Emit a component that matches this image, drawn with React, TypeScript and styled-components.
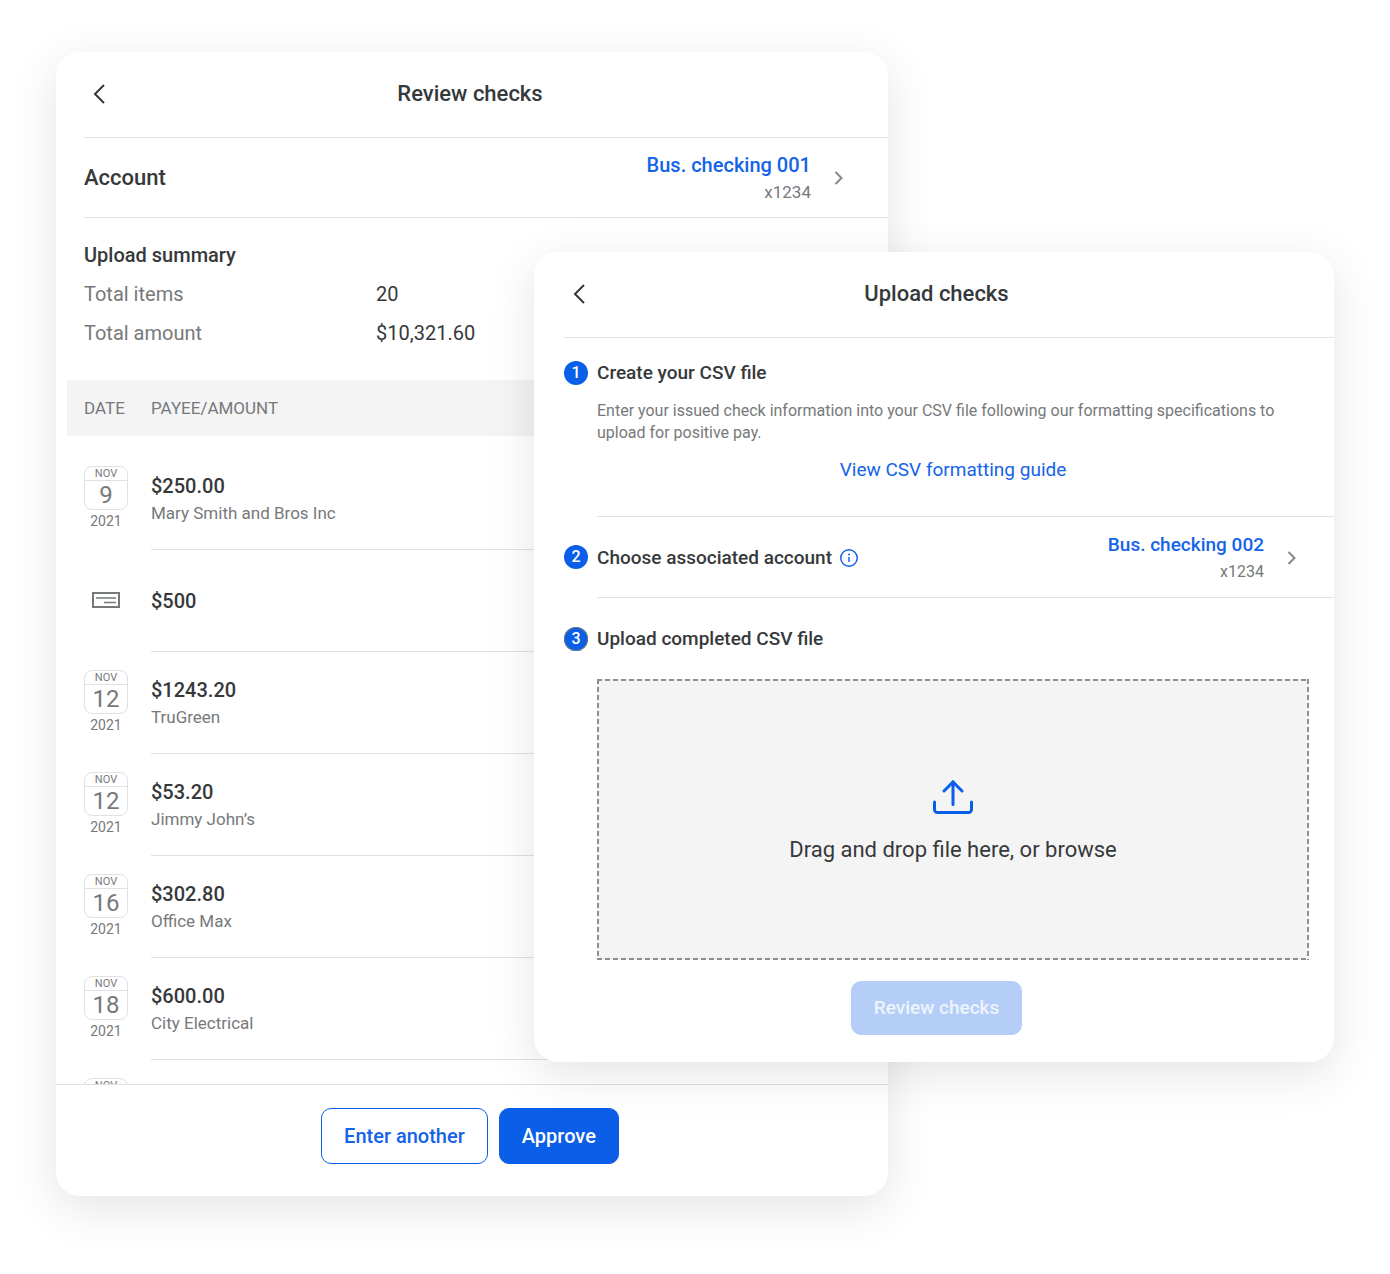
import React from 'react';
import styled, { createGlobalStyle, css } from 'styled-components';

const color = {
  ink: '#36393b',
  muted: '#76797b',
  line: '#e0e1e3',
  fill: '#f4f4f4',
  blue: '#0a5ee8',
  blueText: '#1463e8',
};

const GlobalStyle = createGlobalStyle`
  *, *::before, *::after { box-sizing: border-box; }
  body {
    margin: 0;
    background: #fff;
    color: ${color.ink};
    font-family: Roboto, 'Liberation Sans', sans-serif;
    font-size: 20px;
    line-height: 24px;
  }
  button { font: inherit; cursor: pointer; }
  h1, h2, h3, p, dl, dd, ol { margin: 0; padding: 0; }
`;

/* ---------- shared parts ---------- */

const Stage = styled.main`
  display: grid;
  padding: 52px 56px 78px;
`;

const Card = styled.section<{ $front?: boolean }>`
  grid-area: 1 / 1;
  align-self: start;
  display: flex;
  flex-direction: column;
  background: #fff;
  border-radius: 24px;
  box-shadow: 0 12px 48px rgba(0, 0, 0, 0.11);
  ${({ $front }) =>
    $front
      ? css`
          justify-self: end;
          width: 62.6%;
          margin-top: 200px;
          font-size: 19px;
          z-index: 1;
        `
      : css`
          justify-self: start;
          width: 65.1%;
        `}
`;

const Header = styled.header<{ $left: number; $right: number }>`
  display: grid;
  grid-template-columns: 30px 1fr 30px;
  align-items: center;
  margin-left: ${({ $left }) => $left}px;
  padding: 22px ${({ $right }) => $right}px 23px 0;
  border-bottom: 1px solid ${color.line};
`;

const BackButton = styled.button`
  display: grid;
  place-items: center;
  height: 40px;
  padding: 0;
  border: 0;
  background: none;
  color: ${color.ink};
`;

const Title = styled.h1`
  font-size: 22px;
  font-weight: 500;
  line-height: 28px;
  text-align: center;
`;

const AccountButton = styled.button<{ $right: number }>`
  display: flex;
  align-items: center;
  gap: 23px;
  padding: 0 ${({ $right }) => $right}px 0 0;
  border: 0;
  background: none;
  color: #85888a;
  text-align: right;
`;

const AccountName = styled.span`
  display: block;
  color: ${color.blueText};
  font-weight: 500;
  line-height: 28px;
`;

const AccountNumber = styled.span`
  display: block;
  color: ${color.muted};
  font-size: 17px;
  line-height: 26px;
`;

const Button = styled.button<{ $kind: 'outline' | 'solid' }>`
  height: 56px;
  padding: 0 22px;
  border: 1px solid ${color.blue};
  border-radius: 10px;
  font-weight: 500;
  background: ${({ $kind }) => ($kind === 'solid' ? color.blue : '#fff')};
  color: ${({ $kind }) => ($kind === 'solid' ? '#fff' : color.blueText)};

  &:disabled {
    height: 54px;
    border-color: #b5cef8;
    background: #b5cef8;
    color: #edf4fe;
    cursor: default;
  }
`;

const BackIcon = () => (
  <svg width="14" height="20" viewBox="0 0 14 20" fill="none" stroke="currentColor" strokeWidth="2" aria-hidden="true">
    <path d="M12 1 3 10l9 9" />
  </svg>
);

const ForwardIcon = () => (
  <svg width="10" height="16" viewBox="0 0 10 16" fill="none" stroke="currentColor" strokeWidth="2" aria-hidden="true">
    <path d="m1.5 2 6 6-6 6" />
  </svg>
);

interface AccountPickerProps {
  name: string;
  number: string;
  right: number;
}

const AccountPicker = ({ name, number, right }: AccountPickerProps) => (
  <AccountButton type="button" $right={right}>
    <span>
      <AccountName>{name}</AccountName>
      <AccountNumber>{number}</AccountNumber>
    </span>
    <ForwardIcon />
  </AccountButton>
);

/* ---------- review card ---------- */

const AccountRow = styled.div`
  display: flex;
  align-items: center;
  justify-content: space-between;
  margin-left: 28px;
  padding: 13px 0 12px;
  border-bottom: 1px solid ${color.line};
`;

const AccountLabel = styled.h2`
  font-size: 22px;
  font-weight: 500;
`;

const Summary = styled.section`
  padding: 25px 28px 27px;
`;

const SectionHeading = styled.h2`
  font-size: inherit;
  font-weight: 500;
`;

const Totals = styled.dl`
  display: grid;
  grid-template-columns: 292px 1fr;
  margin-top: 8px;
  line-height: 39px;
`;

const TotalName = styled.dt`
  color: ${color.muted};
`;

const CheckScroller = styled.div`
  max-height: 704px;
  margin-left: 11px;
  overflow-y: auto;
  scrollbar-width: none;
`;

const CheckTable = styled.table`
  width: 100%;
  border-spacing: 0;
  text-align: left;
`;

const HeadCell = styled.th`
  height: 56px;
  padding: 0;
  background: ${color.fill};
  color: ${color.muted};
  font-size: 17px;
  font-weight: 400;

  &:first-child {
    width: 84px;
    padding-left: 17px;
  }
`;

const DateCell = styled.td`
  height: 102px;
  padding: 0 0 2px 17px;
`;

const PayeeCell = styled.td`
  padding: 0;
  border-bottom: 1px solid ${color.line};
`;

const CheckRow = styled.tr`
  &:first-child td {
    height: 114px;
    padding-top: 12px;
  }
`;

const Amount = styled.div`
  font-weight: 500;
  line-height: 28px;
`;

const Payee = styled.div`
  color: ${color.muted};
  font-size: 17px;
  line-height: 26px;
`;

const DateStamp = styled.time`
  display: block;
  width: 44px;
  color: ${color.muted};
  text-align: center;
`;

const CalendarTile = styled.span`
  display: block;
  border: 1px solid ${color.line};
  border-radius: 8px;
`;

const Month = styled.span`
  display: block;
  border-bottom: 1px solid ${color.line};
  font-size: 11px;
  line-height: 13px;
`;

const Day = styled.span`
  display: block;
  font-size: 24px;
  line-height: 28px;
`;

const Year = styled.span`
  display: block;
  margin-top: 2px;
  font-size: 14px;
  line-height: 18px;
`;

const CheckMark = styled.span`
  display: grid;
  place-items: center;
  width: 44px;
  color: ${color.muted};
`;

const Footer = styled.footer`
  display: flex;
  justify-content: center;
  gap: 11px;
  padding: 23px 32px 32px 28px;
  border-top: 1px solid ${color.line};
`;

const CheckIcon = () => (
  <svg width="28" height="16" viewBox="0 0 28 16" fill="none" stroke="currentColor" role="img" aria-label="Undated check">
    <rect x="1" y="1" width="26" height="14" strokeWidth="2" />
    <path d="M4 6h20M12 10.500h12" strokeWidth="1.500" />
  </svg>
);

interface Check {
  day?: string;
  amount: string;
  payee?: string;
}

const checks: Check[] = [
  { day: '9', amount: '$250.00', payee: 'Mary Smith and Bros Inc' },
  { amount: '$500' },
  { day: '12', amount: '$1243.20', payee: 'TruGreen' },
  { day: '12', amount: '$53.20', payee: 'Jimmy John’s' },
  { day: '16', amount: '$302.80', payee: 'Office Max' },
  { day: '18', amount: '$600.00', payee: 'City Electrical' },
  { day: '', amount: '' },
];

const ReviewCard = () => (
  <Card aria-label="Review checks">
    <Header $left={28} $right={32}>
      <BackButton type="button" aria-label="Back">
        <BackIcon />
      </BackButton>
      <Title>Review checks</Title>
    </Header>
    <AccountRow>
      <AccountLabel>Account</AccountLabel>
      <AccountPicker name="Bus. checking 001" number="x1234" right={44} />
    </AccountRow>
    <Summary>
      <SectionHeading>Upload summary</SectionHeading>
      <Totals>
        <TotalName>Total items</TotalName>
        <dd>20</dd>
        <TotalName>Total amount</TotalName>
        <dd>$10,321.60</dd>
      </Totals>
    </Summary>
    <CheckScroller>
      <CheckTable>
        <thead>
          <tr>
            <HeadCell scope="col">DATE</HeadCell>
            <HeadCell scope="col">PAYEE/AMOUNT</HeadCell>
          </tr>
        </thead>
        <tbody>
          {checks.map(({ day, amount, payee }, index) => (
            <CheckRow key={index}>
              <DateCell>
                {day === undefined ? (
                  <CheckMark>
                    <CheckIcon />
                  </CheckMark>
                ) : (
                  <DateStamp>
                    <CalendarTile>
                      <Month>NOV</Month>
                      <Day>{day || '\u00a0'}</Day>
                    </CalendarTile>
                    <Year>{day ? '2021' : '\u00a0'}</Year>
                  </DateStamp>
                )}
              </DateCell>
              <PayeeCell>
                <Amount>{amount}</Amount>
                {payee && <Payee>{payee}</Payee>}
              </PayeeCell>
            </CheckRow>
          ))}
        </tbody>
      </CheckTable>
    </CheckScroller>
    <Footer>
      <Button type="button" $kind="outline">Enter another</Button>
      <Button type="button" $kind="solid">Approve</Button>
    </Footer>
  </Card>
);

/* ---------- upload card ---------- */

const Steps = styled.ol`
  padding-left: 30px;
  list-style: none;
`;

const Step = styled.li`
  display: grid;
  grid-template-columns: 33px 1fr;
`;

const StepNumber = styled.span<{ $top: number; $ring?: boolean }>`
  width: 24px;
  height: 24px;
  margin-top: ${({ $top }) => $top}px;
  border-radius: 50%;
  background: ${color.blue};
  box-shadow: ${({ $ring }) => ($ring ? 'inset 0 0 0 1px #6f7680' : 'none')};
  color: #fff;
  font-size: 16px;
  font-weight: 500;
  text-align: center;
`;

const GuideStep = styled.div`
  padding: 23px 25px 34px 0;
  border-bottom: 1px solid ${color.line};
`;

const Description = styled.p`
  margin-top: 15px;
  color: ${color.muted};
  font-size: 16px;
  line-height: 22px;
`;

const GuideLink = styled.a`
  display: block;
  margin-top: 14px;
  color: ${color.blueText};
  text-align: center;
  text-decoration: none;
`;

const AccountStep = styled.div`
  display: flex;
  align-items: center;
  justify-content: space-between;
  padding: 14px 0 12px;
  border-bottom: 1px solid ${color.line};

  ${AccountNumber} {
    font-size: 16px;
  }
`;

const HeadingWithInfo = styled.div`
  display: flex;
  align-items: center;
  gap: 7px;
`;

const InfoButton = styled.button`
  display: grid;
  padding: 0;
  border: 0;
  background: none;
  color: ${color.blueText};
`;

const UploadStep = styled.div`
  padding: 29px 25px 0 0;
`;

const dashes = (angle: number) => `repeating-linear-gradient(${angle}deg, #8c8e90 0 5px, transparent 5px 8px)`;

const DropZone = styled.label`
  display: flex;
  flex-direction: column;
  align-items: center;
  gap: 22px;
  margin-top: 28px;
  padding: 101px 16px 96px;
  background:
    ${dashes(90)} top / 100% 2px no-repeat,
    ${dashes(90)} bottom / 100% 2px no-repeat,
    ${dashes(180)} left / 2px 100% no-repeat,
    ${dashes(180)} right / 2px 100% no-repeat,
    ${color.fill};
  font-size: 22px;
  line-height: 28px;
  cursor: pointer;
`;

const FileInput = styled.input`
  position: absolute;
  width: 1px;
  height: 1px;
  opacity: 0;
`;

const UploadActions = styled.div`
  display: flex;
  justify-content: center;
  padding: 21px 25px 27px 30px;
`;

const InfoIcon = () => (
  <svg width="20" height="20" viewBox="0 0 20 20" fill="none" stroke="currentColor" aria-hidden="true">
    <circle cx="10" cy="10" r="8.250" strokeWidth="1.500" />
    <path d="M10 9v5" strokeWidth="1.500" />
    <circle cx="10" cy="6.500" r="1" fill="currentColor" stroke="none" />
  </svg>
);

const UploadIcon = () => (
  <svg width="40" height="34" viewBox="0 0 40 34" fill="none" stroke={color.blue} strokeWidth="3" strokeLinecap="round" aria-hidden="true">
    <path d="M20 24.500V2" />
    <path d="m11 11 9-9 9 9" />
    <path d="M1.500 22v7.500a3 3 0 0 0 3 3h31a3 3 0 0 0 3-3V22" />
  </svg>
);

const UploadCard = () => (
  <Card $front aria-label="Upload checks">
    <Header $left={30} $right={25}>
      <BackButton type="button" aria-label="Back">
        <BackIcon />
      </BackButton>
      <Title>Upload checks</Title>
    </Header>
    <Steps>
      <Step>
        <StepNumber $top={23}>1</StepNumber>
        <GuideStep>
          <SectionHeading>Create your CSV file</SectionHeading>
          <Description>
            Enter your issued check information into your CSV file following our formatting specifications to
            upload for positive pay.
          </Description>
          <GuideLink href="#guide">View CSV formatting guide</GuideLink>
        </GuideStep>
      </Step>
      <Step>
        <StepNumber $top={28}>2</StepNumber>
        <AccountStep>
          <HeadingWithInfo>
            <SectionHeading>Choose associated account</SectionHeading>
            <InfoButton type="button" aria-label="About associated accounts">
              <InfoIcon />
            </InfoButton>
          </HeadingWithInfo>
          <AccountPicker name="Bus. checking 002" number="x1234" right={37} />
        </AccountStep>
      </Step>
      <Step>
        <StepNumber $top={29} $ring>3</StepNumber>
        <UploadStep>
          <SectionHeading>Upload completed CSV file</SectionHeading>
          <DropZone htmlFor="csv-file">
            <UploadIcon />
            Drag and drop file here, or browse
            <FileInput id="csv-file" type="file" accept=".csv" />
          </DropZone>
        </UploadStep>
      </Step>
    </Steps>
    <UploadActions>
      <Button type="button" $kind="solid" disabled>Review checks</Button>
    </UploadActions>
  </Card>
);

export default function App() {
  return (
    <>
      <GlobalStyle />
      <Stage>
        <ReviewCard />
        <UploadCard />
      </Stage>
    </>
  );
}
